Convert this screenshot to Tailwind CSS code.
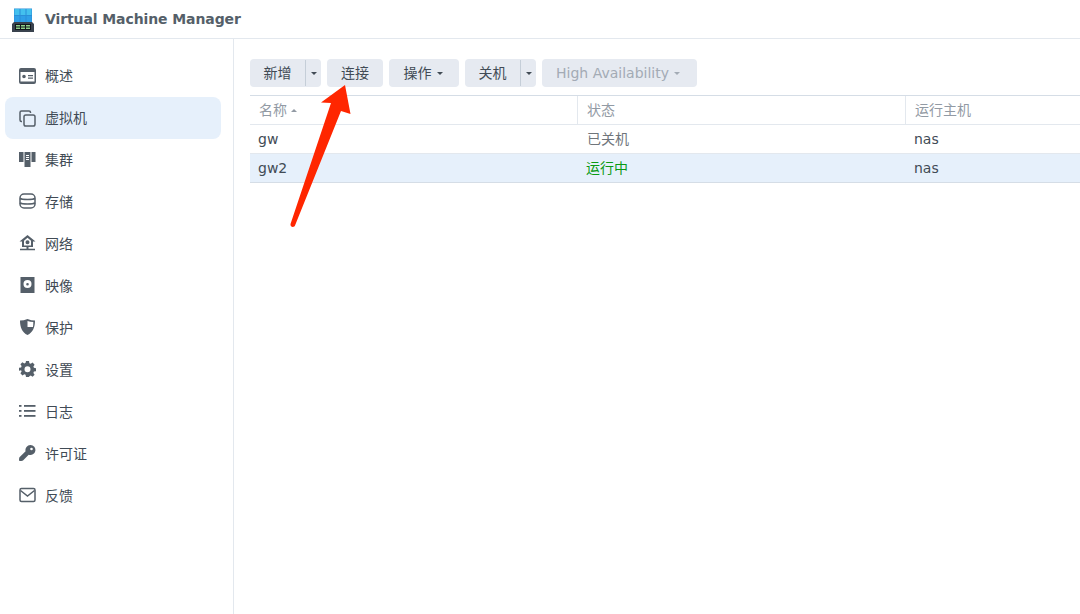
<!DOCTYPE html>
<html lang="zh">
<head>
<meta charset="utf-8">
<script src="https://cdn.jsdelivr.net/npm/@tailwindcss/browser@4"></script>
</head>
<body class="w-[1080px] h-[614px] overflow-hidden bg-white relative font-['DejaVu_Sans','Noto_Sans_CJK_SC',sans-serif] text-[#414b55]">
<header class="h-[39px] border-b border-[#e3e8ee] flex items-center pl-[12px] gap-[11px]">
  <svg width="22" height="25" viewBox="0 0 22 25" class="mt-[-1px] translate-y-[2px]">
    <rect x="2" y="0.500" width="18" height="15" fill="#2a8fd8"/>
    <g fill="#43c0ee"><rect x="2.500" y="1" width="5" height="6"/><rect x="8.500" y="1" width="5" height="6"/><rect x="14.500" y="1" width="5" height="6"/></g>
    <g fill="#2f9fe8"><rect x="2.500" y="8" width="5" height="6"/><rect x="8.500" y="8" width="5" height="6"/><rect x="14.500" y="8" width="5" height="6"/></g>
    <path d="M2 14 H20 L22 16 V24 H0 V16 Z" fill="#39424e"/>
    <rect x="3" y="16" width="16" height="6" fill="#11161c"/>
    <g fill="#8fd08a"><rect x="4" y="17" width="4" height="1.500"/><rect x="9" y="17" width="4" height="1.500"/><rect x="14" y="17" width="4" height="1.500"/><rect x="4" y="19.500" width="4" height="1.500"/><rect x="9" y="19.500" width="4" height="1.500"/><rect x="14" y="19.500" width="4" height="1.500"/></g>
  </svg>
  <h1 class="text-[14px] font-bold text-[#555f69] leading-none tracking-[-0.1px]">Virtual Machine Manager</h1>
</header>
<div class="flex h-[575px]">
  <nav class="w-[234px] shrink-0 border-r border-[#e3e8ee] pt-[16px] pl-[5px] pr-[12px] flex flex-col text-[14px] leading-[20px] font-['Noto_Sans_CJK_SC',sans-serif]">
    <a class="h-[42px] flex items-center gap-[9px] pl-[14px] rounded-lg">
      <svg width="17" height="16" viewBox="0 0 17 16" fill="#555f69" class="mt-[-1px]"><path fill-rule="evenodd" d="M2 0h13a2 2 0 0 1 2 2v12a2 2 0 0 1-2 2H2a2 2 0 0 1-2-2V2a2 2 0 0 1 2-2zM1.500 4v9.500h14V4zM5 6.700a1.800 1.800 0 1 1 0 3.600A1.800 1.800 0 0 1 5 6.700zM9 7h5v1.300H9zM9 9.500h5v1.300H9z"/></svg>
      <span class="mt-[-2px]">概述</span></a>
    <a class="h-[42px] flex items-center gap-[9px] pl-[14px] rounded-lg bg-[#e6f0fb]">
      <svg width="17" height="17" viewBox="0 0 17 17" fill="none" stroke="#555f69" stroke-width="1.500"><path d="M3 11.500H2.500a1.500 1.500 0 0 1-1.500-1.500V2.500A1.500 1.500 0 0 1 2.500 1H10a1.500 1.500 0 0 1 1.500 1.500V3"/><rect x="5" y="5" width="11" height="11" rx="1.800"/></svg>
      <span class="mt-[-2px]">虚拟机</span></a>
    <a class="h-[42px] flex items-center gap-[9px] pl-[14px] rounded-lg">
      <svg width="17" height="16" viewBox="0 0 17 16" fill="#555f69" class="mt-[-2px]"><path fill-rule="evenodd" d="M0 1h4.500v10H0zM12.500 1H16.500v10h-4zM5.500 1h6v15h-6zM7 4v1h3V4zM7 6v1h3V6zM7 8v1h3V8z"/></svg>
      <span class="mt-[-2px]">集群</span></a>
    <a class="h-[42px] flex items-center gap-[9px] pl-[14px] rounded-lg">
      <svg width="17" height="16" viewBox="0 0 17 16" fill="none" stroke="#555f69" stroke-width="1.500" class="mt-[-2px]"><rect x="1" y="1" width="15" height="14" rx="4"/><path d="M1 5.500c2 1.300 13 1.300 15 0M1 10c2 1.300 13 1.300 15 0"/></svg>
      <span class="mt-[-2px]">存储</span></a>
    <a class="h-[42px] flex items-center gap-[9px] pl-[14px] rounded-lg">
      <svg width="17" height="16" viewBox="0 0 17 16" fill="#555f69" class="mt-[-2px]"><path fill-rule="evenodd" d="M8.500 0L16.500 6.500h-2.500v5.500H3V6.500H.5zM8.500 2.800L5 5.700v4.800h7V5.700zM8.500 5.200a2 2 0 1 1 0 4 2 2 0 0 1 0-4zM7.500 12h2v1.700H16v1.500H1v-1.500h6.500z"/></svg>
      <span class="mt-[-2px]">网络</span></a>
    <a class="h-[42px] flex items-center gap-[9px] pl-[14px] rounded-lg">
      <svg width="17" height="16" viewBox="0 0 17 16" fill="#555f69" class="mt-[-2px]"><path fill-rule="evenodd" d="M1.500 0h14v16h-14zM8.500 3a4 4 0 1 0 0 8 4 4 0 0 0 0-8zM8.500 6a1.300 1.300 0 1 1 0 2.600 1.300 1.300 0 0 1 0-2.600z"/></svg>
      <span class="mt-[-2px]">映像</span></a>
    <a class="h-[42px] flex items-center gap-[9px] pl-[14px] rounded-lg">
      <svg width="17" height="16" viewBox="0 0 17 16" fill="#555f69" class="mt-[-2px]"><path fill-rule="evenodd" d="M8.500 0c2.500 1 5 1.500 7.500 1.500C16 8 14 13.500 8.500 16 3 13.500 1 8 1 1.500 3.500 1.500 6 1 8.500 0zM8.500 2v6H14c.2-1.300.3-3 .3-5-2-.1-4-.4-5.800-1z"/></svg>
      <span class="mt-[-2px]">保护</span></a>
    <a class="h-[42px] flex items-center gap-[9px] pl-[14px] rounded-lg">
      <svg width="17" height="16" viewBox="0 0 17 16" fill="#555f69" class="mt-[-2px]"><path fill-rule="evenodd" d="M7 0h3l.4 2.200 1.300.6 1.900-1.200 2 2.100-1.200 1.800.5 1.300 2.100.4v3l-2.100.4-.5 1.300 1.200 1.800-2 2.100-1.900-1.200-1.300.6L10 16H7l-.4-2.200-1.300-.6-1.900 1.200-2-2.100 1.200-1.800-.5-1.300L0 9.800v-3l2.100-.4.500-1.300L1.400 3.300l2-2.100 1.900 1.200 1.300-.6zM8.500 5.200a3 3 0 1 0 0 6 3 3 0 0 0 0-6z"/></svg>
      <span class="mt-[-2px]">设置</span></a>
    <a class="h-[42px] flex items-center gap-[9px] pl-[14px] rounded-lg">
      <svg width="17" height="16" viewBox="0 0 17 16" fill="#555f69" class="mt-[-2px]"><rect x="0" y="2" width="2.500" height="1.800"/><rect x="5" y="2" width="11.500" height="1.800"/><rect x="0" y="7" width="2.500" height="1.800"/><rect x="5" y="7" width="11.500" height="1.800"/><rect x="0" y="12" width="2.500" height="1.800"/><rect x="5" y="12" width="11.500" height="1.800"/></svg>
      <span class="mt-[-2px]">日志</span></a>
    <a class="h-[42px] flex items-center gap-[9px] pl-[14px] rounded-lg">
      <svg width="17" height="16" viewBox="0 0 17 16" fill="#555f69" class="mt-[-2px]"><path fill-rule="evenodd" d="M11.500 0a5 5 0 1 1-1.800 9.700L4 15.500c-.5.500-3.500.8-3.800.3-.4-.5 0-3.300.3-3.600L6.600 6.300A5 5 0 0 1 11.500 0zM12.500 2.700a1.300 1.300 0 1 0 0 2.600 1.300 1.300 0 0 0 0-2.600z"/></svg>
      <span class="mt-[-2px]">许可证</span></a>
    <a class="h-[42px] flex items-center gap-[9px] pl-[14px] rounded-lg">
      <svg width="17" height="16" viewBox="0 0 17 16" fill="none" stroke="#555f69" stroke-width="1.500" class="mt-[-2px]"><rect x="1" y="1.500" width="15" height="13" rx="1.500"/><path d="M1.500 3.500L8.500 9l7-5.500"/></svg>
      <span class="mt-[-2px]">反馈</span></a>
  </nav>
  <main class="flex-1 min-w-0 pt-[20px] pl-[16px]">
    <div class="flex gap-[6px] h-[28px] text-[14px] leading-[20px]">
      <div class="w-[71px] flex rounded-[4px] bg-[#e6eaf1]">
        <button class="w-[56px] border-r border-[#c5ced8] my-[1px]">新增</button>
        <span class="flex-1 flex items-center justify-center"><i class="border-x-[3.500px] border-x-transparent border-t-[3.500px] border-t-[#414b55]"></i></span>
      </div>
      <button class="w-[56px] rounded-[4px] bg-[#e6eaf1]">连接</button>
      <button class="w-[70px] rounded-[4px] bg-[#e6eaf1] flex items-center justify-center gap-[5px] pr-[2px]">操作<i class="border-x-[3.500px] border-x-transparent border-t-[3.500px] border-t-[#414b55]"></i></button>
      <div class="w-[71px] flex rounded-[4px] bg-[#e6eaf1]">
        <button class="w-[56px] border-r border-[#c5ced8] my-[1px]">关机</button>
        <span class="flex-1 flex items-center justify-center"><i class="border-x-[3.500px] border-x-transparent border-t-[3.500px] border-t-[#414b55]"></i></span>
      </div>
      <button class="w-[155px] rounded-[4px] bg-[#e6eaf1] text-[#a3abb5] flex items-center justify-center gap-[5px] pr-[3px]">High Availability<i class="border-x-[3.500px] border-x-transparent border-t-[3.500px] border-t-[#a3abb5]"></i></button>
    </div>
    <div class="mt-[8px] border-t border-[#d5dde6] text-[14px] leading-[20px]">
      <div class="h-[29px] grid grid-cols-[328px_328px_1fr] border-b border-[#e3e8ee] text-[#929aa4]">
        <div class="border-r border-[#e3e8ee] pl-[9px] flex items-center gap-[4px]">名称<i class="border-x-[3.500px] border-x-transparent border-b-[3.500px] border-b-[#929aa4]"></i></div>
        <div class="border-r border-[#e3e8ee] pl-[9px] flex items-center">状态</div>
        <div class="pl-[9px] flex items-center">运行主机</div>
      </div>
      <div class="h-[29px] grid grid-cols-[328px_328px_1fr] border-b border-[#e3e8ee] items-center">
        <div class="pl-[8px]">gw</div>
        <div class="pl-[9px] text-[#6f757b]">已关机</div>
        <div class="pl-[8px]">nas</div>
      </div>
      <div class="h-[29px] grid grid-cols-[328px_328px_1fr] border-b border-[#d5dde6] bg-[#e6f0fb] items-center">
        <div class="pl-[8px]">gw2</div>
        <div class="pl-[8px] text-[#0a9a14]">运行中</div>
        <div class="pl-[8px]">nas</div>
      </div>
    </div>
  </main>
</div>
<svg class="absolute left-0 top-0 pointer-events-none" width="1080" height="614" viewBox="0 0 1080 614">
  <path d="M345 85 L321 102.500 L331 103 L290.500 224 C290 227 294 228 295 225.500 L341 111 L350.500 114 Z" fill="#ff2600"/>
</svg>
</body>
</html>
